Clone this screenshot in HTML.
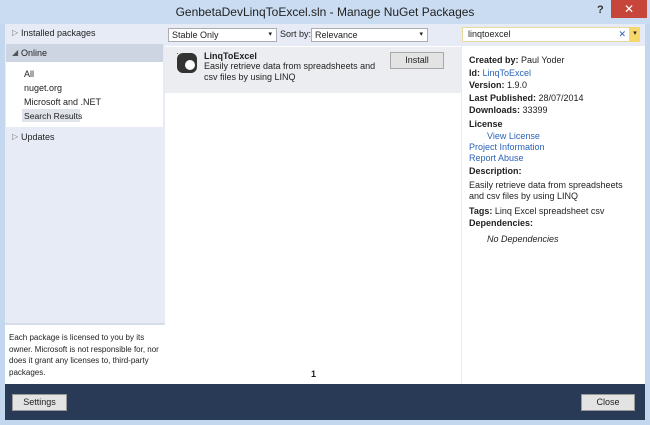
<!DOCTYPE html>
<html><head><style>
*{margin:0;padding:0;box-sizing:border-box}
body{width:650px;height:425px;background:#c3d7ef;font-family:"Liberation Sans",sans-serif;font-size:9px;color:#1e1e1e;position:relative;overflow:hidden}
.a{position:absolute}
.lnk{color:#2a63b8}
b{font-weight:bold}
</style></head><body>
<div class="a" style="left:0;top:0;width:650px;height:24px;background:#c9dcf1"></div>
<div class="a" style="left:0;top:5px;width:650px;text-align:center;font-size:12px;color:#222">GenbetaDevLinqToExcel.sln - Manage NuGet Packages</div>
<div class="a" style="left:597px;top:4px;font-size:11px;font-weight:bold;color:#333">?</div>
<div class="a" style="left:611px;top:0;width:36px;height:18px;background:#c7463c;color:#fff;text-align:center;font-size:12px;line-height:18px">✕</div>

<div class="a" style="left:5px;top:24px;width:640px;height:360px;background:#e6ebf5"></div>
<!-- left -->
<div class="a" style="left:12px;top:28px;color:#777;font-size:8px">▷</div>
<div class="a" style="left:21px;top:28px">Installed packages</div>
<div class="a" style="left:6px;top:44px;width:157px;height:18px;background:#cdd5e3"></div>
<div class="a" style="left:12px;top:48px;color:#555;font-size:8px">◢</div>
<div class="a" style="left:21px;top:48px">Online</div>
<div class="a" style="left:6px;top:62px;width:157px;height:65px;background:#fff"></div>
<div class="a" style="left:24px;top:69px">All</div>
<div class="a" style="left:24px;top:83px">nuget.org</div>
<div class="a" style="left:24px;top:97px">Microsoft and .NET</div>
<div class="a" style="left:22px;top:109px;width:58px;height:13px;background:#e0e3ea"></div>
<div class="a" style="left:24px;top:111px;white-space:nowrap;font-size:8.6px">Search Results</div>
<div class="a" style="left:12px;top:132px;color:#777;font-size:8px">▷</div>
<div class="a" style="left:21px;top:132px">Updates</div>
<div class="a" style="left:5px;top:323px;width:160px;height:61px;background:#fff;border-top:2px solid #d6dce8"></div>
<div class="a" style="left:9px;top:332px;width:155px;font-size:8px;line-height:11.5px">Each package is licensed to you by its owner. Microsoft is not responsible for, nor does it grant any licenses to, third-party packages.</div>

<!-- middle -->
<div class="a" style="left:165px;top:46px;width:296px;height:338px;background:#fff"></div>
<div class="a" style="left:168px;top:28px;width:109px;height:14px;background:#fff;border:1px solid #abadb3;padding-left:3px;line-height:12px">Stable Only<span class="a" style="right:4px;top:0;font-size:7px">▾</span></div>
<div class="a" style="left:280px;top:29px">Sort by:</div>
<div class="a" style="left:311px;top:28px;width:117px;height:14px;background:#fff;border:1px solid #abadb3;padding-left:3px;line-height:12px">Relevance<span class="a" style="right:4px;top:0;font-size:7px">▾</span></div>
<div class="a" style="left:165px;top:47px;width:296px;height:46px;background:#ebedf0"></div>
<div class="a" style="left:177px;top:53px;width:20px;height:20px;border-radius:6px;background:#333"></div>
<div class="a" style="left:185px;top:60px;width:10px;height:10px;border-radius:50%;background:#fff"></div>
<div class="a" style="left:176px;top:52px;width:3px;height:3px;border-radius:50%;background:#333;border:1px solid #ebedf0"></div>
<div class="a" style="left:204px;top:51px;font-weight:bold">LinqToExcel</div>
<div class="a" style="left:204px;top:61px;width:185px;line-height:10.5px">Easily retrieve data from spreadsheets and csv files by using LINQ</div>
<div class="a" style="left:390px;top:52px;width:54px;height:17px;background:#e3e3e3;border:1px solid #a8a8a8;text-align:center;line-height:15px">Install</div>
<div class="a" style="left:311px;top:369px;font-weight:bold">1</div>

<!-- right -->
<div class="a" style="left:462px;top:46px;width:183px;height:338px;background:#fff"></div>
<div class="a" style="left:462px;top:27px;width:168px;height:15px;background:#fff;border:1px solid #e8d9a0;padding-left:5px;line-height:13px">linqtoexcel<span class="a" style="right:3px;top:0;color:#2a63b8">✕</span></div>
<div class="a" style="left:630px;top:27px;width:10px;height:15px;background:#f5d76a;font-size:7px;text-align:center;line-height:14px">▾</div>
<div class="a" style="left:469px;top:54px;line-height:12.5px">
<div><b>Created by:</b> Paul Yoder</div>
<div><b>Id:</b> <span class="lnk">LinqToExcel</span></div>
<div><b>Version:</b> 1.9.0</div>
<div><b>Last Published:</b> 28/07/2014</div>
<div><b>Downloads:</b> 33399</div>
<div style="margin-top:1px"><b>License</b></div>
<div class="lnk" style="padding-left:18px;margin-top:1px;line-height:11px">View License</div>
<div class="lnk" style="line-height:11px">Project Information</div>
<div class="lnk" style="line-height:11px">Report Abuse</div>
<div style="margin-top:1px"><b>Description:</b></div>
<div style="width:170px;line-height:11px;margin-top:2px">Easily retrieve data from spreadsheets and csv files by using LINQ</div>
<div style="margin-top:3px"><b>Tags:</b> Linq Excel spreadsheet csv</div>
<div><b>Dependencies:</b></div>
<div style="padding-left:18px;margin-top:3px;font-style:italic">No Dependencies</div>
</div>

<!-- footer -->
<div class="a" style="left:5px;top:384px;width:640px;height:36px;background:#293a56"></div>
<div class="a" style="left:12px;top:394px;width:55px;height:17px;background:#e3e3e3;border:1px solid #999;text-align:center;line-height:15px">Settings</div>
<div class="a" style="left:581px;top:394px;width:54px;height:17px;background:#e3e3e3;border:1px solid #999;text-align:center;line-height:15px">Close</div>
</body></html>
